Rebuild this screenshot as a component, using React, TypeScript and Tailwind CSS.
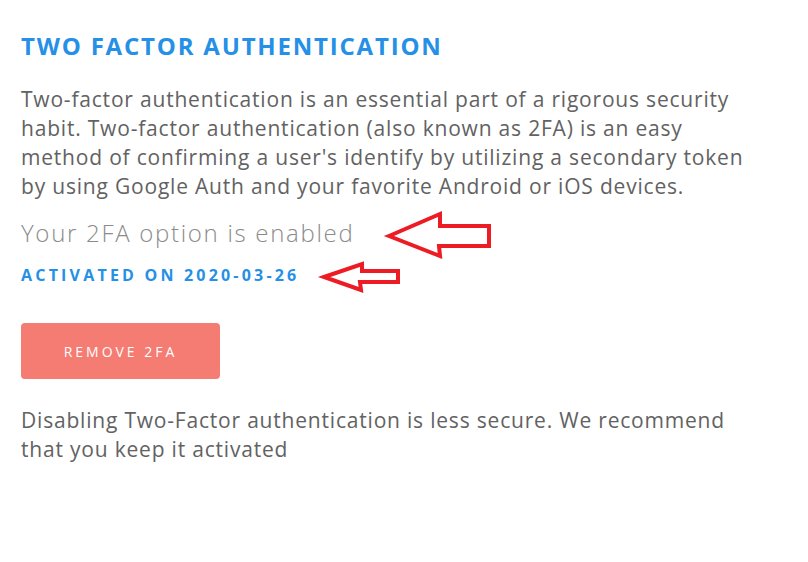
export default function App() {
  return (
    <div className="relative min-h-[562px] w-[808px] bg-white font-['Open_Sans',sans-serif]">
      <div className="pl-[21px] pt-[30px] pr-[40px]">
        {/* Header */}
        <h1 className="text-[24px] font-bold leading-[32px] tracking-[1.8px] text-[#2590e6]">
          TWO FACTOR AUTHENTICATION
        </h1>

        <p className="mt-[23px] max-w-[738px] text-[21px] leading-[29px] tracking-[0.8px] text-[#626262]">
          Two-factor authentication is an essential part of a rigorous security habit. Two-factor
          authentication (also known as 2FA) is an easy method of confirming a user's identify by
          utilizing a secondary token by using Google Auth and your favorite Android or iOS devices.
        </p>

        {/* Status */}
        <p className="mt-[16px] text-[24px] font-light leading-[32px] tracking-[1.7px] text-[#8b8b8b]">
          Your 2FA option is enabled
        </p>
        <p className="mt-[14px] text-[16px] font-bold leading-[24px] tracking-[3.2px] text-[#2590e6]">
          ACTIVATED ON 2020-03-26
        </p>

        <button className="mt-[36px] flex h-[56px] w-[199px] items-center justify-center rounded-[4px] bg-[#f47c72] text-[14px] tracking-[3px] text-white">
          REMOVE 2FA
        </button>

        <p className="mt-[27px] max-w-[738px] text-[21px] leading-[29px] tracking-[0.8px] text-[#626262]">
          Disabling Two-Factor authentication is less secure. We recommend that you keep it activated
        </p>
      </div>

      {/* Annotation arrows */}
      <svg className="pointer-events-none absolute left-0 top-0" width="808" height="562">
        <polygon
          points="389,236 440,214 440,226 489,226 489,246 439,246 440,256"
          fill="none"
          stroke="#ed1c24"
          strokeWidth="4"
          strokeLinejoin="miter"
        />
        <polygon
          points="324,277 362,264 362,271 398,271 398,282 360,282 361,290"
          fill="none"
          stroke="#ed1c24"
          strokeWidth="4"
          strokeLinejoin="miter"
        />
      </svg>
    </div>
  );
}
